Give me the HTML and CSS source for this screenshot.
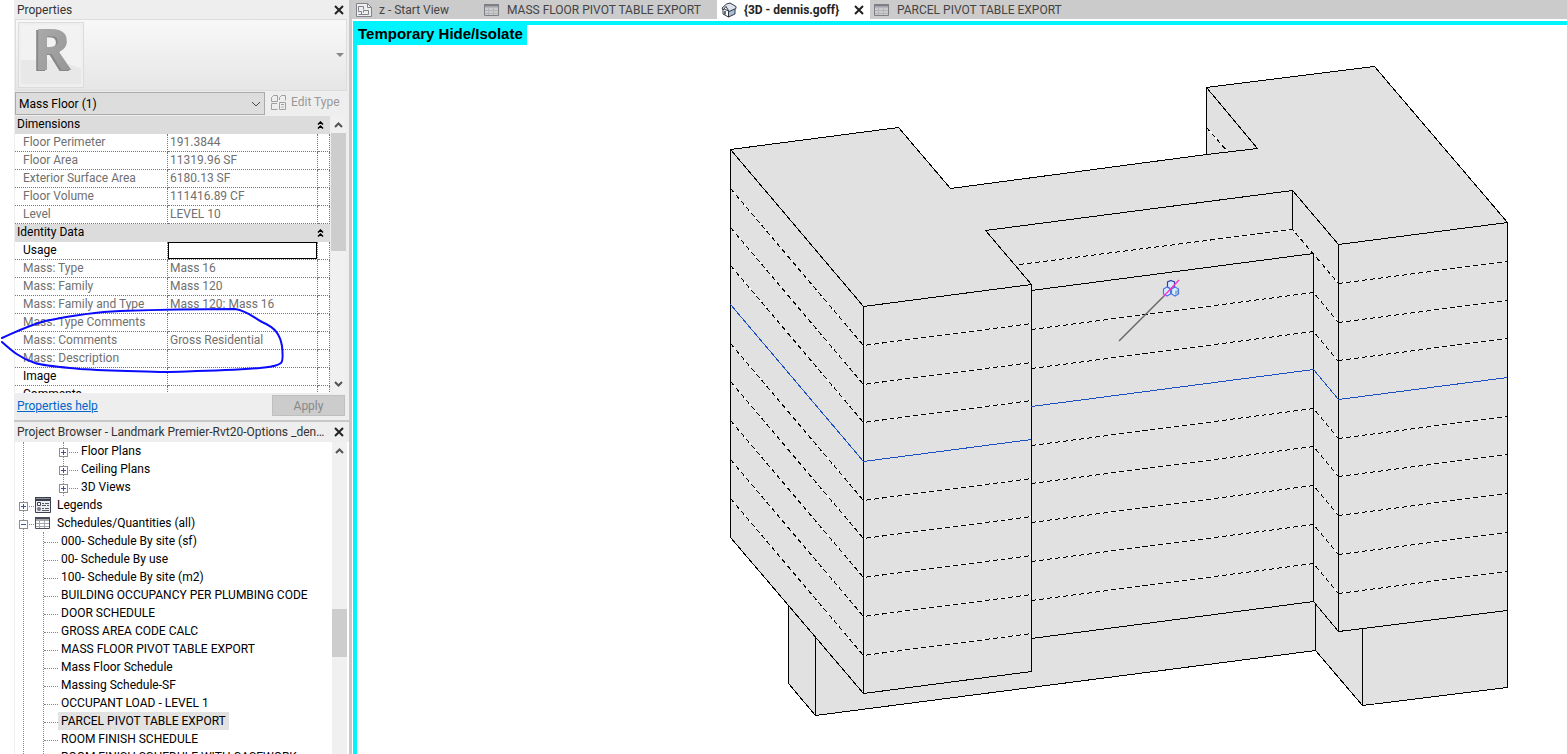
FILE: index.html
```html
<!DOCTYPE html>
<html lang="en">
<head>
    <meta charset="UTF-8">
    <meta name="viewport" content="width=device-width, initial-scale=1.0">
    <title>{3D - dennis.goff}</title>
    <link rel="stylesheet" href="styles.css">
</head>
<body>
    <svg class="symbols" width="0" height="0" aria-hidden="true">
        <symbol id="icon-close" viewBox="0 0 10 10">
            <path d="M1 1L9 9M9 1L1 9" fill="none" stroke="#222" stroke-width="2"/>
        </symbol>
        <symbol id="icon-schedule" viewBox="0 0 16 14">
            <path d="M1 4.500h13M1 7.500h13M1 10.500h13M4.500 4v9M9.500 4v9" stroke="#a4a7b0" fill="none"/>
            <path d="M0.500 1.500h14v11h-14z" fill="none" stroke="#4a4d58"/>
            <path d="M0 1h15v2.500H0z" fill="#4a4d58"/>
        </symbol>
        <symbol id="icon-up" viewBox="0 0 9 6">
            <path d="M1 5L4.500 1.500L8 5" fill="none" stroke="#555" stroke-width="2"/>
        </symbol>
        <symbol id="icon-collapse" viewBox="0 0 7 8">
            <path d="M1 3.500L3.500 1L6 3.500M1 7.500L3.500 5L6 7.500" fill="none" stroke="#000" stroke-width="1.500"/>
        </symbol>
    </svg>

    <aside class="sidebar">
        <section class="properties">
            <header class="panel-title">
                <h2>Properties</h2>
                <button class="close" aria-label="Close properties"><svg width="10" height="10"><use href="#icon-close"/></svg></button>
            </header>
            <div class="type-selector">
                <svg class="type-logo" width="66" height="66" viewBox="0 0 66 66">
                    <defs>
                        <linearGradient id="logoFace" x1="0" y1="0" x2="1" y2="1">
                            <stop offset="0" stop-color="#b0b0b0"/>
                            <stop offset="1" stop-color="#929292"/>
                        </linearGradient>
                    </defs>
                    <rect x="0.500" y="0.500" width="65" height="65" fill="#efefef" stroke="#dcdcdc"/>
                    <rect x="3" y="38" width="60" height="24" fill="#e8e8e8"/>
                    <path d="M3 3h60v43L38 38H3z" fill="#f2f2f2"/>
                    <text class="logo-letter" x="15" y="48" fill="url(#logoFace)">R</text>
                </svg>
                <button class="type-arrow" aria-label="Choose type"></button>
            </div>
            <div class="type-row">
                <div class="filter">
                    <select aria-label="Properties filter"><option>Mass Floor (1)</option></select>
                    <svg width="10" height="6" viewBox="0 0 10 6"><path d="M1 1L5 5L9 1" fill="none" stroke="#444"/></svg>
                </div>
                <button class="edit-type" disabled>
                    <svg width="17" height="17" viewBox="0 0 17 17" fill="none" stroke="#a0a0a0">
                        <path d="M1.500 3.500L3.500 1.500H7.500V7.500H1.500zM9.500 3.500L11.500 1.500H15.500V6.500M9.500 6V3.500M1.500 15.500H7.500M1.500 9.500H7M1.500 9.500v6"/>
                        <path d="M9.500 8.500h6v7h-6zM11 10.500h3M11.500 13h2"/>
                    </svg>
                    Edit Type
                </button>
            </div>
            <div class="property-area">
                <table class="property-grid">
                    <colgroup>
                        <col class="col-name">
                        <col class="col-value">
                        <col class="col-link">
                    </colgroup>
                    <tbody>
                        <tr class="group"><th colspan="2">Dimensions</th><td><svg width="7" height="8"><use href="#icon-collapse"/></svg></td></tr>
                        <tr><th>Floor Perimeter</th><td>191.3844</td><td></td></tr>
                        <tr><th>Floor Area</th><td>11319.96 SF</td><td></td></tr>
                        <tr><th>Exterior Surface Area</th><td>6180.13 SF</td><td></td></tr>
                        <tr><th>Floor Volume</th><td>111416.89 CF</td><td></td></tr>
                        <tr><th>Level</th><td>LEVEL 10</td><td></td></tr>
                        <tr class="group"><th colspan="2">Identity Data</th><td><svg width="7" height="8"><use href="#icon-collapse"/></svg></td></tr>
                        <tr class="editable"><th><label for="usage">Usage</label></th><td class="field"><input type="text" id="usage"></td><td></td></tr>
                        <tr><th>Mass: Type</th><td>Mass 16</td><td></td></tr>
                        <tr><th>Mass: Family</th><td>Mass 120</td><td></td></tr>
                        <tr><th>Mass: Family and Type</th><td>Mass 120: Mass 16</td><td></td></tr>
                        <tr><th>Mass: Type Comments</th><td></td><td></td></tr>
                        <tr><th>Mass: Comments</th><td>Gross Residential</td><td></td></tr>
                        <tr><th>Mass: Description</th><td></td><td></td></tr>
                        <tr class="editable"><th>Image</th><td></td><td></td></tr>
                        <tr class="editable"><th>Comments</th><td></td><td></td></tr>
                    </tbody>
                </table>
                <div class="scrollbar">
                    <svg width="9" height="6"><use href="#icon-up"/></svg>
                    <div class="thumb"></div>
                    <svg class="down" width="9" height="6"><use href="#icon-up"/></svg>
                </div>
            </div>
            <footer class="properties-footer">
                <a href="#">Properties help</a>
                <button class="apply" disabled>Apply</button>
            </footer>
            <!-- hand-drawn markup around the comments row -->
            <svg class="markup" width="290" height="72" viewBox="0 304 290 72">
                <path d="M2 338C20 330 25 327 45 321C75 315 95 312 120 311C150 310 200 309 235 309C248 311 254 318 262 322C276 328 280 335 282 346C283 355 283 361 281 363C276 367 268 367 260 368C225 371 200 371 165 372C140 371 110 371 80 369C60 367 45 366 35 363C20 358 12 351 2 342" fill="none" stroke="#0a0aff" stroke-width="2" stroke-linecap="round"/>
            </svg>
        </section>

        <section class="browser">
            <header class="panel-title">
                <h2>Project Browser - Landmark Premier-Rvt20-Options _dennis.goff</h2>
                <button class="close" aria-label="Close project browser"><svg width="10" height="10"><use href="#icon-close"/></svg></button>
            </header>
            <div class="browser-area">
                <ul class="tree">
                    <li>
                        <ul class="views">
                            <li class="node"><button class="toggle" aria-label="Expand"></button><span>Floor Plans</span></li>
                            <li class="node"><button class="toggle" aria-label="Expand"></button><span>Ceiling Plans</span></li>
                            <li class="node"><button class="toggle" aria-label="Expand"></button><span>3D Views</span></li>
                        </ul>
                    </li>
                    <li class="node category">
                        <button class="toggle" aria-label="Expand"></button>
                        <svg width="16" height="16" viewBox="0 0 16 16">
                            <path d="M0.500 0.500h15v15h-15z" fill="#eceef1" stroke="#3c404c"/>
                            <path d="M0 0h16v4H0z" fill="#3c404c"/>
                            <path d="M1 1.500h14" stroke="#8b8f9a"/>
                            <path d="M2.500 5.500h3v3h-3z" fill="#fff" stroke="#3c404c"/>
                            <circle cx="4" cy="12" r="2" fill="#777b86"/>
                            <path d="M7 6.500h2M10 6.500h4M7 8.500h4M12 8.500h2M7 11.500h2M10 11.500h4M7 13.500h7" stroke="#555965"/>
                        </svg>
                        <span>Legends</span>
                    </li>
                    <li class="node category">
                        <button class="toggle open" aria-label="Collapse"></button>
                        <svg width="16" height="14"><use href="#icon-schedule"/></svg>
                        <span>Schedules/Quantities (all)</span>
                    </li>
                    <li>
                        <ul class="schedules">
                            <li><a href="#">000- Schedule By site (sf)</a></li>
                            <li><a href="#">00- Schedule By use</a></li>
                            <li><a href="#">100- Schedule By site (m2)</a></li>
                            <li><a href="#">BUILDING OCCUPANCY PER PLUMBING CODE</a></li>
                            <li><a href="#">DOOR SCHEDULE</a></li>
                            <li><a href="#">GROSS AREA CODE CALC</a></li>
                            <li><a href="#">MASS FLOOR PIVOT TABLE EXPORT</a></li>
                            <li><a href="#">Mass Floor Schedule</a></li>
                            <li><a href="#">Massing Schedule-SF</a></li>
                            <li><a href="#">OCCUPANT LOAD - LEVEL 1</a></li>
                            <li><a href="#" class="selected">PARCEL PIVOT TABLE EXPORT</a></li>
                            <li><a href="#">ROOM FINISH SCHEDULE</a></li>
                            <li><a href="#">ROOM FINISH SCHEDULE WITH CASEWORK</a></li>
                        </ul>
                    </li>
                </ul>
                <div class="scrollbar">
                    <svg width="9" height="6"><use href="#icon-up"/></svg>
                    <div class="thumb"></div>
                </div>
            </div>
        </section>
    </aside>

    <main class="workspace">
        <nav class="tabs">
            <a href="#" class="tab tab-start">
                <svg width="16" height="14" viewBox="0 0 16 14" fill="none" stroke="#80838b">
                    <path d="M0.500 0.500H11.500L15.500 4.500V13.500H0.500z" fill="#eee"/>
                    <path d="M11.500 0.500V4.500H15.500M2.500 3.500H7.500V6.500M2.500 3.500V8.500H5.500M5.500 8.500V11.500M2.500 11.500H12.500V7.500H7.500V9.500"/>
                </svg>
                z - Start View
            </a>
            <a href="#" class="tab tab-mass">
                <svg class="faded" width="16" height="14"><use href="#icon-schedule"/></svg>
                MASS FLOOR PIVOT TABLE EXPORT
            </a>
            <div class="tab active">
                <svg width="16" height="16" viewBox="0 0 16 16" stroke="#333846" stroke-linejoin="round">
                    <path d="M2 6.500V12L7.500 15V9z" fill="#fff"/>
                    <path d="M7.500 9L14 6V12L7.500 15z" fill="#a8bdd6"/>
                    <path d="M1 6L5.500 2L9 1L15 4.500V6.500L8 9.500L5 4.500L2 8z" fill="#dce2ea"/>
                    <path d="M4 9v3.500" stroke-width="1.500"/>
                </svg>
                <strong>{3D - dennis.goff}</strong>
                <button class="close" aria-label="Close view"><svg width="10" height="10"><use href="#icon-close"/></svg></button>
            </div>
            <a href="#" class="tab">
                <svg class="faded" width="16" height="14"><use href="#icon-schedule"/></svg>
                PARCEL PIVOT TABLE EXPORT
            </a>
        </nav>
        <div class="viewport">
            <span class="view-mode">Temporary Hide/Isolate</span>
            <svg class="model" viewBox="357 25 1210 729" preserveAspectRatio="xMinYMin meet">
                <defs>
                    <path id="wings" d="M730 149L863 306L1031 284M1338 244L1507 222"/>
                    <path id="middle" d="M1031 290L1313 253L1338 283"/>
                    <path id="recess" d="M1019 264L1292 229L1338 283M1206 127L1227 151"/>
                    <g id="floors">
                        <use href="#recess"/>
                        <use href="#wings" y="39"/>
                        <use href="#wings" y="78"/>
                        <use href="#wings" y="116"/>
                        <use href="#wings" y="194"/>
                        <use href="#wings" y="232"/>
                        <use href="#wings" y="271"/>
                        <use href="#wings" y="310"/>
                        <use href="#wings" y="349"/>
                        <use href="#middle" y="39"/>
                        <use href="#middle" y="78"/>
                        <use href="#middle" y="155"/>
                        <use href="#middle" y="193"/>
                        <use href="#middle" y="232"/>
                        <use href="#middle" y="271"/>
                        <use href="#middle" y="310"/>
                    </g>
                </defs>
                <g transform="translate(0.500 0.500)">
                    <!-- outline of the whole mass -->
                    <path class="mass" d="M730 149L898 127L950 188L1206 154V87L1374 66L1507 222V687L1362 705L1315 650L815 715L788 683V605L730 537z"/>
                    <use class="floor-base" href="#floors"/>
                    <use class="floor-dash" href="#floors"/>
                    <path class="edge" d="M730 149L863 306V693L730 537M863 306L1031 284V671L863 693M1031 284L985 230L1292 190L1338 244L1507 222M1292 190V229M1338 244V631L1507 610M1206 87L1257 148L1206 154M1031 290L1313 253V601L1338 631M1031 638L1313 601M1315 603V650M1362 628V705M788 605V683M815 637V715"/>
                    <g class="level-line">
                        <use href="#wings" y="155"/>
                        <use href="#middle" y="116"/>
                    </g>
                </g>
                <path d="M1119 341L1164 296" stroke="#666" stroke-width="1.500"/>
                <g fill="#d8eeff" stroke="#4876e8" stroke-width="1.200">
                    <path d="M1171 280.500L1174.500 282V287L1171 289L1167.500 287V282z" stroke="#303fa8"/>
                    <path d="M1167 287L1170.500 289V294L1167 296L1163.500 294V289zM1175 287L1178.500 289V294L1175 296L1171.500 294V289z"/>
                    <path d="M1175 291L1178 289.500V293.500L1175 295z" fill="#9ab5b8" stroke="none"/>
                </g>
                <path d="M1163 297L1179 280" stroke="#ff2fc0" stroke-width="1.300"/>
            </svg>
        </div>
    </main>
</body>
</html>
```
FILE: styles.css
```css
* {
    box-sizing: border-box;
}
body {
    display: flex;
    height: 100vh;
    margin: 0;
    padding-left: 14px;
    overflow: hidden;
    background-color: #fff;
    color: #000;
    font-family: Roboto, "Open Sans", sans-serif;
    font-size: 12px;
    line-height: 18px;
}
button, input, select {
    margin: 0;
    padding: 0;
    font: inherit;
    color: inherit;
}
button {
    border: none;
    background: none;
}
ul {
    margin: 0;
    padding: 0;
    list-style: none;
}
.symbols {
    position: absolute;
}

/* Left side: properties and project browser */
.sidebar {
    display: flex;
    flex-direction: column;
    flex: 0 0 338px;
    min-width: 0;
    border-right: 3px solid #c8c8c8;
    background-color: #eee;
}
.panel-title {
    display: flex;
    align-items: center;
    justify-content: space-between;
    height: 19px;
    padding: 0 5px 0 3px;
}
.panel-title h2 {
    margin: 0;
    overflow: hidden;
    font-size: 12px;
    font-weight: normal;
    color: #333;
    white-space: nowrap;
    text-overflow: ellipsis;
}
.close {
    display: flex;
    flex: none;
    margin-left: 8px;
}
.properties {
    border-bottom: 2px solid #c8c8c8;
}
.type-selector {
    display: flex;
    align-items: center;
    justify-content: space-between;
    height: 72px;
    margin: 0 2px 0 1px;
    padding: 0 2px;
    border: 1px solid #ddd;
    background: linear-gradient(#f8f8f8, #e6e6e6);
}
.logo-letter {
    font-family: "Open Sans", sans-serif;
    font-size: 58px;
    font-weight: bold;
    filter: drop-shadow(-2px 1px 0 #888);
}
.type-arrow {
    border: 4px solid transparent;
    border-top-color: #888;
    border-bottom: none;
}
.type-row {
    display: flex;
    align-items: center;
    height: 25px;
    padding: 1px 0 1px 1px;
}
.filter {
    position: relative;
    width: 250px;
}
.filter select {
    display: block;
    width: 100%;
    height: 23px;
    padding-left: 3px;
    border: 1px solid #aaa;
    border-radius: 0;
    background-color: #ddd;
    appearance: none;
}
.filter svg {
    position: absolute;
    top: 9px;
    right: 4px;
    pointer-events: none;
}
.edit-type {
    display: flex;
    align-items: center;
    gap: 4px;
    margin-left: 5px;
    padding-bottom: 3px;
    color: #999;
}
.property-area {
    display: flex;
    height: 277px;
    margin-left: 1px;
    overflow: hidden;
}
.property-grid {
    flex: none;
    width: 315px;
    height: 288px;
    border-spacing: 0;
    table-layout: fixed;
    background-color: #fff;
    color: #707070;
}
.col-name {
    width: 153px;
}
.col-value {
    width: 150px;
}
.col-link {
    width: 12px;
}
.property-grid th,
.property-grid td {
    height: 18px;
    padding: 0 2px;
    border-right: 1px dotted #777;
    border-bottom: 1px dotted #777;
    line-height: 16px;
    text-align: left;
    vertical-align: top;
    font-weight: normal;
    white-space: nowrap;
}
.property-grid th {
    padding-left: 8px;
}
.property-grid .group th,
.property-grid .group td {
    padding: 0 2px;
    border: none;
    background-color: #dcdcdc;
    color: #000;
}
.property-grid .group td {
    vertical-align: middle;
}
.property-grid .group svg {
    display: block;
    margin-left: -3px;
}
.property-grid .editable {
    color: #000;
}
.property-grid .field {
    padding: 0;
}
.field input {
    display: block;
    width: 100%;
    height: 17px;
    border: 1px solid #000;
}
.scrollbar {
    display: flex;
    flex: none;
    flex-direction: column;
    align-items: center;
    width: 15px;
    margin-left: 1px;
    padding: 6px 0;
    background-color: #f0f0f0;
}
.scrollbar svg {
    flex: none;
}
.scrollbar .thumb {
    width: 15px;
    background-color: #cdcdcd;
}
.property-area .thumb {
    height: 118px;
    margin-top: 5px;
}
.scrollbar .down {
    margin-top: auto;
    transform: rotate(180deg);
}
.properties-footer {
    display: flex;
    align-items: center;
    justify-content: space-between;
    height: 27px;
    padding: 0 4px 2px 3px;
}
.properties-footer a {
    color: #0066cc;
}
.apply {
    width: 73px;
    height: 21px;
    border: 1px solid #bfbfbf;
    background-color: #ccc;
    color: #888;
}
.markup {
    position: absolute;
    top: 304px;
    left: 0;
    pointer-events: none;
}

/* Project browser tree */
.browser {
    display: flex;
    flex: 1;
    flex-direction: column;
    min-height: 0;
}
.browser .panel-title {
    flex: none;
    height: 20px;
}
.browser-area {
    display: flex;
    flex: 1;
    min-height: 0;
    margin-left: 1px;
    overflow: hidden;
    background-color: #fff;
}
.tree {
    flex: 1;
    align-self: flex-start;
    margin-left: 8px;
    border-left: 1px dotted #888;
}
.views {
    margin-left: 39px;
    border-left: 1px dotted #888;
}
.node {
    display: flex;
    align-items: center;
    height: 18px;
}
.node svg {
    margin-right: 6px;
}
.toggle {
    width: 9px;
    height: 9px;
    margin: 3px 0 0 -5px;
    border: 1px solid #8f8f8f;
    background: linear-gradient(#3b55a0, #3b55a0) center / 5px 1px no-repeat, linear-gradient(#3b55a0, #3b55a0) center / 1px 5px no-repeat, #fff;
}
.toggle.open {
    background: linear-gradient(#3b55a0, #3b55a0) center / 5px 1px no-repeat, #fff;
}
.toggle + * {
    flex: none;
}
.node::before {
    order: 1;
    width: 9px;
    margin: 3px 3px 0 1px;
    border-top: 1px dotted #888;
    content: "";
}
.node.category::before {
    width: 5px;
    margin-right: 1px;
}
.node > svg,
.node > span {
    order: 2;
}
.schedules {
    margin-left: 19px;
    border-left: 1px dotted #888;
}
.schedules li {
    display: flex;
    align-items: center;
    height: 18px;
}
.schedules li::before {
    width: 14px;
    margin-top: 3px;
    border-top: 1px dotted #888;
    content: "";
}
.schedules a {
    padding: 0 3px;
    color: #000;
    text-decoration: none;
    white-space: nowrap;
}
.schedules .selected {
    background-color: #e2e2e2;
}
.browser .scrollbar {
    margin-right: 2px;
}
.browser .thumb {
    height: 48px;
    margin-top: 155px;
}

/* Right side: view tabs and the model */
.workspace {
    display: flex;
    flex: 1;
    flex-direction: column;
    min-width: 0;
}
.tabs {
    display: flex;
    height: 19px;
    background-color: #cbcbcb;
}
.tab {
    display: flex;
    align-items: center;
    gap: 7px;
    padding: 0 4px;
    color: #444;
    text-decoration: none;
    white-space: nowrap;
}
.tab-start {
    width: 128px;
}
.tab-mass {
    width: 237px;
}
.tab.active {
    width: 153px;
    padding-right: 6px;
    background-color: #fff;
    color: #222;
}
.tab.active .close {
    margin-left: auto;
}
.faded {
    opacity: 0.6;
}
.viewport {
    position: relative;
    flex: 1;
    min-height: 0;
    margin: 2px 0 0 1px;
    border-top: 4px solid #00f4ff;
    border-left: 4px solid #00f4ff;
}
.view-mode {
    position: absolute;
    top: 0;
    left: 0;
    padding: 0 4px 2px 1px;
    background-color: #00f4ff;
    font-family: "Liberation Sans", Arial, sans-serif;
    font-size: 15px;
    font-weight: bold;
}
.model {
    display: block;
    width: 100%;
    height: 100%;
}
.mass {
    fill: #e1e1e1;
    stroke: #000;
    shape-rendering: crispEdges;
}
.edge {
    fill: none;
    stroke: #000;
    shape-rendering: crispEdges;
}
.floor-base,
.floor-dash {
    fill: none;
    stroke: #fff;
    shape-rendering: crispEdges;
}
.floor-dash {
    stroke: #000;
    stroke-dasharray: 5 3;
}
.level-line {
    fill: none;
    stroke: #1c4fc4;
    shape-rendering: crispEdges;
}
```
